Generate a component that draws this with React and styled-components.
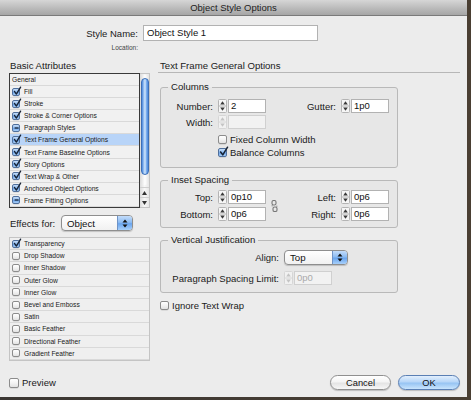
import React from 'react';
import styled, { createGlobalStyle } from 'styled-components';

const Global = createGlobalStyle`
  html, body { margin: 0; padding: 0; }
  body {
    width: 471px; height: 400px; overflow: hidden;
    background: linear-gradient(90deg, #3b3733, #4a3f33);
    font-family: "Liberation Sans", Arial, sans-serif;
    color: #1a1a1a;
  }
`;

const Window = styled.div`
  width: 467px; height: 397px; background: #ececec;
  display: flex; flex-direction: column; box-sizing: border-box;
`;

const TitleBar = styled.div`
  height: 15px; flex: none; border-bottom: 1px solid #7a7a7a;
  background: linear-gradient(#d6d6d6, #b8b8b8 60%, #a6a6a6);
  display: flex; align-items: center; justify-content: center;
  font-size: 9.5px; color: #222;
`;

const Body = styled.div`
  flex: 1; display: flex; flex-direction: column;
  padding: 0 7px 7px 9px;
`;

const NameRow = styled.div`
  display: flex; align-items: center; margin-top: 9px; height: 16px;
`;

const RightLabel = styled.span`
  width: ${p => p.$w}px; flex: none; text-align: right;
  font-size: ${p => p.$size || 9.5}px; white-space: nowrap;
  color: ${p => (p.$dim ? '#444' : '#1a1a1a')};
`;

const TextInput = styled.div`
  width: ${p => p.$w}px; height: ${p => p.$h || 14}px; box-sizing: border-box; flex: none;
  border: 1px solid #b2b2b2; border-top-color: #8c8c8c;
  background: ${p => (p.$disabled ? '#f2f2f2' : '#fff')};
  color: ${p => (p.$disabled ? '#aaa' : '#111')};
  border-color: ${p => (p.$disabled ? '#d0d0d0' : '#b2b2b2')};
  font-size: 9.5px; line-height: ${p => (p.$h || 14) - 2}px;
  padding-left: ${p => p.$pad || 2}px; white-space: nowrap; overflow: hidden;
`;

const LocationRow = styled.div`
  display: flex; margin-top: 3px; height: 8px; line-height: 8px;
`;

const Main = styled.div`
  display: flex; align-items: flex-start; gap: 8px; margin-top: 8px;
`;

const LeftCol = styled.div`
  width: 141px; flex: none; display: flex; flex-direction: column;
`;

const RightCol = styled.div`
  width: 302px; flex: none; display: flex; flex-direction: column;
`;

const SectionTitle = styled.div`
  font-size: 9.6px; line-height: 12px; height: 12px; padding-left: 1px; white-space: nowrap;
`;

const PanelHeader = styled.div`
  font-size: 9.6px; line-height: 12px; height: 12px; padding-left: 2px;
  border-bottom: 1px solid #b7b7b7; white-space: nowrap;
`;

const BasicList = styled.div`
  margin-top: 1px; height: 135px; display: flex;
`;

const ListBody = styled.div`
  flex: 1; border: 1px solid #3a3a3a; background: #f1f1f1; overflow: hidden;
`;

const Row = styled.div`
  height: ${p => p.$h}px; box-sizing: border-box;
  border-bottom: 1px solid #d9d9d9;
  background: ${p => (p.$sel ? '#b8d4f8' : 'transparent')};
  display: flex; align-items: center; gap: 4px; padding-left: 2px;
  font-size: 6.7px; white-space: nowrap; color: #1a1a1a;
`;

const ScrollBar = styled.div`
  width: 10px; flex: none; display: flex; flex-direction: column;
  background: linear-gradient(90deg, #dcdcdc, #f7f7f7 50%, #e6e6e6);
  border: 1px solid #c4c4c4; border-left: none; box-sizing: border-box;
`;

const Track = styled.div`
  flex: 1; margin: 1px 0 2px; border-radius: 5px;
  background: linear-gradient(90deg, #d8d8d8, #ffffff 55%, #e2e2e2);
  padding: 3px 0; display: flex; flex-direction: column; box-sizing: border-box;
`;

const Thumb = styled.div`
  height: 97px; margin: 0 0.5px; border-radius: 4px;
  border: 1px solid #3b6fb8; box-sizing: border-box;
  background: linear-gradient(90deg, #4a86dc, #a9cdf6 35%, #d3e6fb 50%, #79adee 75%, #4d88db);
`;

const ArrowBtn = styled.div`
  height: 10px; flex: none; display: flex; align-items: center; justify-content: center;
  border-top: 1px solid #cfcfcf; box-sizing: border-box;
`;

const EffectsRow = styled.div`
  margin-top: 7px; height: 16px; display: flex; align-items: center;
`;

const PlainLabel = styled.span`
  font-size: ${p => p.$size || 9.5}px; white-space: nowrap;
  width: ${p => (p.$w ? `${p.$w}px` : 'auto')}; flex: none;
  padding-left: ${p => p.$pl || 0}px;
`;

const EffectsList = styled.div`
  margin-top: 6px; height: 124px; border: 1px solid #c4c4c4; background: #efefef;
  box-sizing: border-box; overflow: hidden;
`;

const Select = styled.div`
  width: ${p => p.$w}px; height: ${p => p.$h}px; box-sizing: border-box; flex: none;
  border: 1px solid #8e8e8e; border-radius: 4px; overflow: hidden;
  background: linear-gradient(#ffffff, #f1f1f1);
  box-shadow: 0 1px 1px rgba(0, 0, 0, 0.18);
  display: flex; align-items: center;
`;

const SelectText = styled.span`
  flex: 1; padding-left: 5px; font-size: 9.7px; color: #111;
`;

const SelectArrows = styled.span`
  width: 14px; align-self: stretch; display: flex; align-items: center; justify-content: center;
  border-left: 1px solid #6f93c6;
  background: linear-gradient(#c3dcfa, #8dbcf2 45%, #6aa5ee 55%, #a8d0fa);
`;

const Group = styled.fieldset`
  margin: ${p => p.$mt}px 0 0 2px; width: 238px; box-sizing: border-box;
  border: 1px solid #b9b9b9; border-radius: 3px;
  padding: ${p => p.$pt}px 0 ${p => p.$pb}px 0;
  background: rgba(0, 0, 0, 0.018);
  min-width: 0;
`;

const Legend = styled.legend`
  margin-left: 7px; padding: 0 3px; font-size: 9.6px; line-height: 12px; height: 12px;
`;

const FieldRow = styled.div`
  display: flex; align-items: center; height: ${p => p.$h || 14}px;
  margin-top: ${p => p.$mt || 0}px;
`;

const SpinWrap = styled.div`
  display: flex; align-items: center; flex: none;
`;

const StepperBox = styled.span`
  margin: 0 1px 0 5px; display: flex; flex: none;
`;

const CheckRow = styled.div`
  display: flex; align-items: center; gap: ${p => p.$gap || 3}px;
  height: ${p => p.$h || 12}px; margin-top: ${p => p.$mt || 0}px;
  padding-left: ${p => p.$pl || 0}px;
  font-size: ${p => p.$size || 9.5}px; white-space: nowrap;
`;

const InsetGrid = styled.div`
  display: grid; grid-template-columns: 105px 16px auto; grid-template-rows: 14px 14px;
  row-gap: 3px; align-items: center;
`;

const ChainCell = styled.div`
  grid-column: 2; grid-row: 1 / span 2; display: flex; justify-content: center; align-items: center;
`;

const Box = styled.span`
  width: ${p => p.$s}px; height: ${p => p.$s}px; flex: none; box-sizing: border-box;
  border: 1px solid ${p => (p.$state ? '#4f6f9c' : '#8c8c8c')};
  border-radius: 2px; position: relative;
  background: ${p => (p.$state
    ? 'linear-gradient(#c6ddf8, #8fbcf0 45%, #6ba3ea 55%, #a9cff6)'
    : 'linear-gradient(#ffffff, #f3f3f3 50%, #e2e2e2)')};
  box-shadow: 0 0.5px 0.5px rgba(0, 0, 0, 0.15);
`;

const Mark = styled.svg`
  position: absolute; left: 0; top: ${p => p.$top}px; overflow: visible;
`;

const Footer = styled.div`
  margin-top: 14px; height: 15px; display: flex; align-items: center;
`;

const Spacer = styled.div`
  flex: 1;
`;

const Button = styled.button`
  width: ${p => p.$w}px; height: 15px; padding: 0; margin-left: ${p => p.$ml || 0}px;
  border-radius: 8px; font-family: "Liberation Sans", Arial, sans-serif; font-size: 9.3px; color: #111;
  border: 1px solid ${p => (p.$primary ? '#5a7fb4' : '#8f8f8f')};
  background: ${p => (p.$primary
    ? 'linear-gradient(#e2effd, #b7d6f8 45%, #97c4f3 55%, #c9e4fd)'
    : 'linear-gradient(#ffffff, #f4f4f4 45%, #e4e4e4 55%, #f7f7f7)')};
  box-shadow: 0 1px 1px rgba(0, 0, 0, 0.2);
`;

function Check({ state, size = 9 }) {
  const s = size;
  return (
    <Box $s={s} $state={state}>
      {state === 'on' && (
        <Mark $top={-2} width={s} height={s} viewBox={`0 0 ${s} ${s}`}>
          <path d={`M${s * 0.18} ${s * 0.55} L${s * 0.42} ${s * 0.88} L${s * 0.95} ${s * 0.02}`}
            fill="none" stroke="#172233" strokeWidth={s * 0.17} strokeLinecap="round" strokeLinejoin="round" />
        </Mark>
      )}
      {state === 'mixed' && (
        <Mark $top={-1} width={s} height={s} viewBox={`0 0 ${s} ${s}`}>
          <rect x={s * 0.2} y={s * 0.42} width={s * 0.5} height={s * 0.16} fill="#172233" />
        </Mark>
      )}
    </Box>
  );
}

function Stepper({ disabled }) {
  const c = disabled ? '#c4c4c4' : '#3a3a3a';
  const b = disabled ? '#d6d6d6' : '#b4b4b4';
  return (
    <StepperBox>
      <svg width="9" height="14" viewBox="0 0 9 14">
        <rect x="0.5" y="0.5" width="8" height="13" rx="1" fill={disabled ? '#f1f1f1' : '#f6f6f6'} stroke={b} />
        <line x1="1" y1="7" x2="8" y2="7" stroke={b} />
        <path d="M4.5 2.2 L6.8 5.4 L2.2 5.4 Z" fill={c} />
        <path d="M4.5 11.8 L6.8 8.6 L2.2 8.6 Z" fill={c} />
      </svg>
    </StepperBox>
  );
}

function Spin({ label, labelW, value, disabled, w = 38 }) {
  return (
    <SpinWrap>
      <RightLabel $w={labelW}>{label}</RightLabel>
      <Stepper disabled={disabled} />
      <TextInput $w={w} $disabled={disabled}>{value}</TextInput>
    </SpinWrap>
  );
}

function PopArrows() {
  return (
    <svg width="6" height="9" viewBox="0 0 6 9">
      <path d="M3 0.5 L5.5 3.5 L0.5 3.5 Z" fill="#111" />
      <path d="M3 8.5 L5.5 5.5 L0.5 5.5 Z" fill="#111" />
    </svg>
  );
}

function Popup({ text, w, h }) {
  return (
    <Select $w={w} $h={h}>
      <SelectText>{text}</SelectText>
      <SelectArrows><PopArrows /></SelectArrows>
    </Select>
  );
}

function Chain() {
  return (
    <svg width="7" height="12" viewBox="0 0 7 12">
      <rect x="1" y="0.5" width="4" height="4.5" rx="1.6" fill="none" stroke="#777" strokeWidth="1.1" />
      <rect x="2" y="7" width="4" height="4.5" rx="1.6" fill="none" stroke="#777" strokeWidth="1.1" />
      <line x1="0.5" y1="5.8" x2="2" y2="5.8" stroke="#888" strokeWidth="0.8" />
      <line x1="5" y1="6.2" x2="6.5" y2="6.2" stroke="#888" strokeWidth="0.8" />
    </svg>
  );
}

const basic = [
  { t: 'General', c: null },
  { t: 'Fill', c: 'on' },
  { t: 'Stroke', c: 'on' },
  { t: 'Stroke & Corner Options', c: 'on' },
  { t: 'Paragraph Styles', c: 'mixed' },
  { t: 'Text Frame General Options', c: 'on', sel: true },
  { t: 'Text Frame Baseline Options', c: 'on' },
  { t: 'Story Options', c: 'on' },
  { t: 'Text Wrap & Other', c: 'on' },
  { t: 'Anchored Object Options', c: 'on' },
  { t: 'Frame Fitting Options', c: 'mixed' },
];

const effects = [
  'Transparency', 'Drop Shadow', 'Inner Shadow', 'Outer Glow', 'Inner Glow',
  'Bevel and Emboss', 'Satin', 'Basic Feather', 'Directional Feather', 'Gradient Feather',
];

export default function App() {
  return (
    <>
      <Global />
      <Window>
        <TitleBar>Object Style Options</TitleBar>
        <Body>
          <NameRow>
            <RightLabel $w={129}>Style Name:</RightLabel>
            <span style={{ width: 5 }} />
            <TextInput $w={175} $h={16} $pad={3}>Object Style 1</TextInput>
          </NameRow>
          <LocationRow>
            <RightLabel $w={129} $size={6.5} $dim>Location:</RightLabel>
          </LocationRow>

          <Main>
            <LeftCol>
              <SectionTitle>Basic Attributes</SectionTitle>
              <BasicList>
                <ListBody>
                  {basic.map(r => (
                    <Row key={r.t} $h={12.09} $sel={r.sel}>
                      {r.c && <Check state={r.c} size={8} />}
                      <span>{r.t}</span>
                    </Row>
                  ))}
                </ListBody>
                <ScrollBar>
                  <Track><Thumb /></Track>
                  <ArrowBtn>
                    <svg width="5" height="4" viewBox="0 0 5 4"><path d="M2.5 0 L5 4 L0 4 Z" fill="#333" /></svg>
                  </ArrowBtn>
                  <ArrowBtn>
                    <svg width="5" height="4" viewBox="0 0 5 4"><path d="M2.5 4 L5 0 L0 0 Z" fill="#333" /></svg>
                  </ArrowBtn>
                </ScrollBar>
              </BasicList>

              <EffectsRow>
                <PlainLabel $w={51} $pl={1}>Effects for:</PlainLabel>
                <Popup text="Object" w={72} h={16} />
              </EffectsRow>

              <EffectsList>
                {effects.map((t, i) => (
                  <Row key={t} $h={12.2}>
                    <Check state={i === 0 ? 'on' : null} size={8} />
                    <span>{t}</span>
                  </Row>
                ))}
              </EffectsList>
            </LeftCol>

            <RightCol>
              <PanelHeader>Text Frame General Options</PanelHeader>

              <Group $mt={8} $pt={6} $pb={9}>
                <Legend>Columns</Legend>
                <FieldRow>
                  <Spin label="Number:" labelW={52} value="2" />
                  <Spin label="Gutter:" labelW={70} value="1p0" />
                </FieldRow>
                <FieldRow $mt={2}>
                  <Spin label="Width:" labelW={52} value="" disabled />
                </FieldRow>
                <CheckRow $mt={4} $pl={57}>
                  <Check state={null} size={9} />
                  <span>Fixed Column Width</span>
                </CheckRow>
                <CheckRow $mt={1} $pl={57}>
                  <Check state="on" size={9} />
                  <span>Balance Columns</span>
                </CheckRow>
              </Group>

              <Group $mt={6} $pt={4} $pb={6}>
                <Legend>Inset Spacing</Legend>
                <InsetGrid>
                  <Spin label="Top:" labelW={52} value="0p10" />
                  <ChainCell><Chain /></ChainCell>
                  <Spin label="Left:" labelW={54} value="0p6" />
                  <Spin label="Bottom:" labelW={52} value="0p6" />
                  <Spin label="Right:" labelW={54} value="0p6" />
                </InsetGrid>
              </Group>

              <Group $mt={6} $pt={4} $pb={7}>
                <Legend>Vertical Justification</Legend>
                <FieldRow $h={15}>
                  <RightLabel $w={118}>Align:</RightLabel>
                  <span style={{ width: 5 }} />
                  <Popup text="Top" w={64} h={15} />
                </FieldRow>
                <FieldRow $mt={6}>
                  <Spin label="Paragraph Spacing Limit:" labelW={118} value="0p0" disabled />
                </FieldRow>
              </Group>

              <CheckRow $mt={6} $pl={2} $h={12}>
                <Check state={null} size={9} />
                <span>Ignore Text Wrap</span>
              </CheckRow>
            </RightCol>
          </Main>

          <Footer>
            <CheckRow $gap={3} $h={15}>
              <Check state={null} size={10} />
              <span>Preview</span>
            </CheckRow>
            <Spacer />
            <Button $w={61}>Cancel</Button>
            <Button $w={62} $ml={7} $primary>OK</Button>
          </Footer>
        </Body>
      </Window>
    </>
  );
}
